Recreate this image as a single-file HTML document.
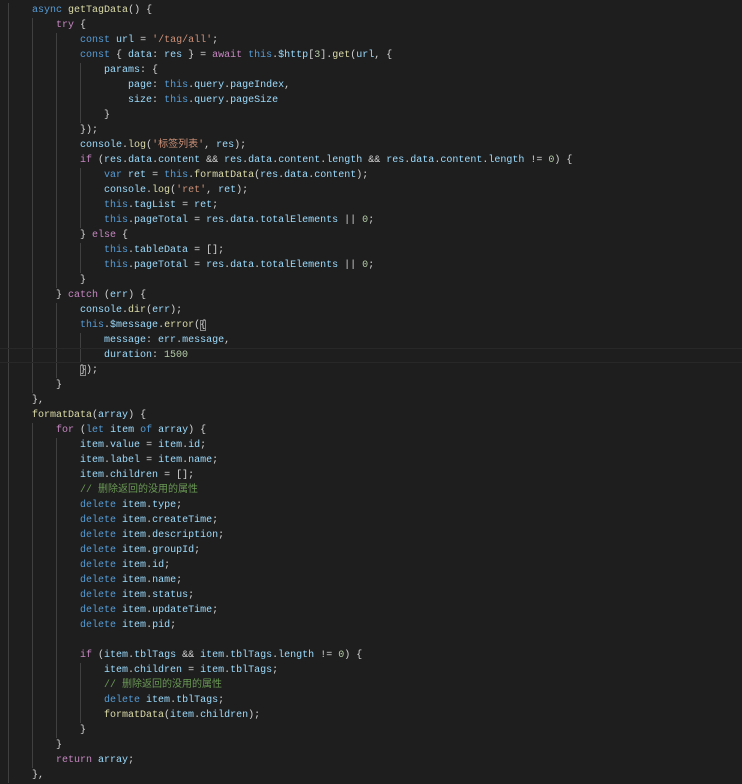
<!DOCTYPE html>
<html><head><meta charset="utf-8"><style>
html,body{margin:0;padding:0;background:#1e1e1e;width:742px;height:784px;overflow:hidden}
#c{position:absolute;left:0;top:3px;width:742px;font-family:"Liberation Mono","Noto Sans CJK SC",monospace;font-size:10px;color:#d4d4d4}
.l{height:15px;line-height:15px;white-space:pre;padding-left:8px;background-image:repeating-linear-gradient(to right,#404040 0 1px,transparent 1px 24px);background-repeat:no-repeat;background-position:8px 0;background-size:0 100%}
.g1{background-size:24px 100%}.g2{background-size:48px 100%}.g3{background-size:72px 100%}.g4{background-size:96px 100%}
.cur{box-shadow:inset 0 1px 0 #282828,inset 0 -1px 0 #282828}
.k{color:#569cd6}.p{color:#c586c0}.v{color:#9cdcfe}.f{color:#dcdcaa}.s{color:#ce9178}.n{color:#b5cea8}.c{color:#6a9955}
.b{outline:1px solid #888;outline-offset:-1px}
</style></head><body><div id="c">
<div class="l g1">    <span class="k">async</span> <span class="f">getTagData</span>() {</div>
<div class="l g2">        <span class="p">try</span> {</div>
<div class="l g3">            <span class="k">const</span> <span class="v">url</span> = <span class="s">'/tag/all'</span>;</div>
<div class="l g3">            <span class="k">const</span> { <span class="v">data</span>: <span class="v">res</span> } = <span class="p">await</span> <span class="k">this</span>.<span class="v">$http</span>[<span class="n">3</span>].<span class="f">get</span>(<span class="v">url</span>, {</div>
<div class="l g4">                <span class="v">params</span>: {</div>
<div class="l g4">                    <span class="v">page</span>: <span class="k">this</span>.<span class="v">query</span>.<span class="v">pageIndex</span>,</div>
<div class="l g4">                    <span class="v">size</span>: <span class="k">this</span>.<span class="v">query</span>.<span class="v">pageSize</span></div>
<div class="l g4">                }</div>
<div class="l g3">            });</div>
<div class="l g3">            <span class="v">console</span>.<span class="f">log</span>(<span class="s">'标签列表'</span>, <span class="v">res</span>);</div>
<div class="l g3">            <span class="p">if</span> (<span class="v">res</span>.<span class="v">data</span>.<span class="v">content</span> &amp;&amp; <span class="v">res</span>.<span class="v">data</span>.<span class="v">content</span>.<span class="v">length</span> &amp;&amp; <span class="v">res</span>.<span class="v">data</span>.<span class="v">content</span>.<span class="v">length</span> != <span class="n">0</span>) {</div>
<div class="l g4">                <span class="k">var</span> <span class="v">ret</span> = <span class="k">this</span>.<span class="f">formatData</span>(<span class="v">res</span>.<span class="v">data</span>.<span class="v">content</span>);</div>
<div class="l g4">                <span class="v">console</span>.<span class="f">log</span>(<span class="s">'ret'</span>, <span class="v">ret</span>);</div>
<div class="l g4">                <span class="k">this</span>.<span class="v">tagList</span> = <span class="v">ret</span>;</div>
<div class="l g4">                <span class="k">this</span>.<span class="v">pageTotal</span> = <span class="v">res</span>.<span class="v">data</span>.<span class="v">totalElements</span> || <span class="n">0</span>;</div>
<div class="l g3">            } <span class="p">else</span> {</div>
<div class="l g4">                <span class="k">this</span>.<span class="v">tableData</span> = [];</div>
<div class="l g4">                <span class="k">this</span>.<span class="v">pageTotal</span> = <span class="v">res</span>.<span class="v">data</span>.<span class="v">totalElements</span> || <span class="n">0</span>;</div>
<div class="l g3">            }</div>
<div class="l g2">        } <span class="p">catch</span> (<span class="v">err</span>) {</div>
<div class="l g3">            <span class="v">console</span>.<span class="f">dir</span>(<span class="v">err</span>);</div>
<div class="l g3">            <span class="k">this</span>.<span class="v">$message</span>.<span class="f">error</span>(<span class="b">{</span></div>
<div class="l g4">                <span class="v">message</span>: <span class="v">err</span>.<span class="v">message</span>,</div>
<div class="l g4 cur">                <span class="v">duration</span>: <span class="n">1500</span></div>
<div class="l g3">            <span class="b">}</span>);</div>
<div class="l g2">        }</div>
<div class="l g1">    },</div>
<div class="l g1">    <span class="f">formatData</span>(<span class="v">array</span>) {</div>
<div class="l g2">        <span class="p">for</span> (<span class="k">let</span> <span class="v">item</span> <span class="k">of</span> <span class="v">array</span>) {</div>
<div class="l g3">            <span class="v">item</span>.<span class="v">value</span> = <span class="v">item</span>.<span class="v">id</span>;</div>
<div class="l g3">            <span class="v">item</span>.<span class="v">label</span> = <span class="v">item</span>.<span class="v">name</span>;</div>
<div class="l g3">            <span class="v">item</span>.<span class="v">children</span> = [];</div>
<div class="l g3">            <span class="c">// 删除返回的没用的属性</span></div>
<div class="l g3">            <span class="k">delete</span> <span class="v">item</span>.<span class="v">type</span>;</div>
<div class="l g3">            <span class="k">delete</span> <span class="v">item</span>.<span class="v">createTime</span>;</div>
<div class="l g3">            <span class="k">delete</span> <span class="v">item</span>.<span class="v">description</span>;</div>
<div class="l g3">            <span class="k">delete</span> <span class="v">item</span>.<span class="v">groupId</span>;</div>
<div class="l g3">            <span class="k">delete</span> <span class="v">item</span>.<span class="v">id</span>;</div>
<div class="l g3">            <span class="k">delete</span> <span class="v">item</span>.<span class="v">name</span>;</div>
<div class="l g3">            <span class="k">delete</span> <span class="v">item</span>.<span class="v">status</span>;</div>
<div class="l g3">            <span class="k">delete</span> <span class="v">item</span>.<span class="v">updateTime</span>;</div>
<div class="l g3">            <span class="k">delete</span> <span class="v">item</span>.<span class="v">pid</span>;</div>
<div class="l g3"> </div>
<div class="l g3">            <span class="p">if</span> (<span class="v">item</span>.<span class="v">tblTags</span> &amp;&amp; <span class="v">item</span>.<span class="v">tblTags</span>.<span class="v">length</span> != <span class="n">0</span>) {</div>
<div class="l g4">                <span class="v">item</span>.<span class="v">children</span> = <span class="v">item</span>.<span class="v">tblTags</span>;</div>
<div class="l g4">                <span class="c">// 删除返回的没用的属性</span></div>
<div class="l g4">                <span class="k">delete</span> <span class="v">item</span>.<span class="v">tblTags</span>;</div>
<div class="l g4">                <span class="f">formatData</span>(<span class="v">item</span>.<span class="v">children</span>);</div>
<div class="l g3">            }</div>
<div class="l g2">        }</div>
<div class="l g2">        <span class="p">return</span> <span class="v">array</span>;</div>
<div class="l g1">    },</div>
</div></body></html>
